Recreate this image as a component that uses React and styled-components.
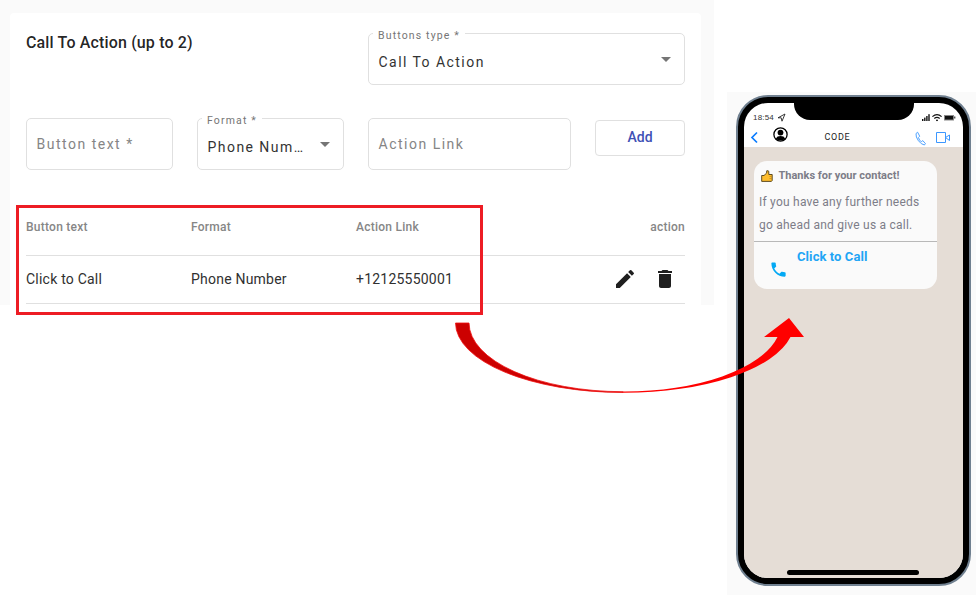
import styled, { createGlobalStyle } from "styled-components";
import { MdArrowDropDown, MdDelete, MdEdit, MdPhone } from "react-icons/md";

const rows = [
  { text: "Click to Call", format: "Phone Number", link: "+12125550001" },
];

function Field({ label, value, width, select }) {
  return (
    <FieldBox $width={width}>
      {value ? <FloatLabel>{label}</FloatLabel> : null}
      {value ? <Value>{value}</Value> : <Placeholder>{label}</Placeholder>}
      {select && <MdArrowDropDown className="arrow" />}
    </FieldBox>
  );
}

function StatusBar() {
  return (
    <Status>
      <Clock>
        18:54
        <svg width="9" height="9" viewBox="0 0 9 9">
          <path d="M8 1 1 4.8h3.2L5 8.200z" fill="none" stroke="#222" strokeWidth=".9" />
        </svg>
      </Clock>
      <svg width="34" height="9" viewBox="0 0 34 9">
        <g fill="#111">
          <rect x="0" y="6" width="1.4" height="2" />
          <rect x="2.1" y="4.6" width="1.4" height="3.4" />
          <rect x="4.2" y="3" width="1.4" height="5" />
          <rect x="6.3" y="1.2" width="1.4" height="6.8" />
          <rect x="22" y="2" width="10" height="5.5" fill="#888" />
          <rect x="23" y="3" width="8" height="3.5" />
          <rect x="32.3" y="3.5" width="1" height="2" />
        </g>
        <g fill="none" stroke="#111" strokeWidth="1.2">
          <path d="M10.4 3.6Q15 -.4 19.6 3.6" />
          <path d="M12.300 5.500Q15 3.200 17.700 5.500" />
          <path d="M14.200 7 15 7.600 15.800 7" />
        </g>
      </svg>
    </Status>
  );
}

function ChatHeader() {
  return (
    <ChatBar>
      <svg width="9" height="13" viewBox="0 0 9 13">
        <path d="M7 1.500 2 6.500l5 5" fill="none" stroke="#0a7cff" strokeWidth="1.700" />
      </svg>
      <Avatar width="15" height="15" viewBox="0 0 15 15">
        <circle cx="7.5" cy="7.5" r="6.6" fill="#fff" stroke="#000" strokeWidth="1.3" />
        <circle cx="7.5" cy="5.6" r="2.9" />
        <path d="M2.800 11.400Q4 9 7.500 9t4.700 2.400Q10.300 13.600 7.500 13.600T2.800 11.400z" />
      </Avatar>
      <Contact>CODE</Contact>
      <Handset width="11" height="15" viewBox="0 0 11 15">
        <path
          d="M2.600 1.200 1 2.600Q.6 6 3.400 9.700t6 4.300l1-1.400-2.600-3-1.500 1.200Q4.200 9.300 3.400 6.500l1.300-1.300z"
          fill="none"
          stroke="#3b97ff"
          strokeWidth=".9"
        />
      </Handset>
      <Camera width="15" height="13" viewBox="0 0 15 13">
        <path
          d="M.5 1.500h9v10h-9zM9.500 6.500 13.500 4v5.500z"
          fill="none"
          stroke="#3b97ff"
        />
      </Camera>
    </ChatBar>
  );
}

function App() {
  return (
    <Page>
      <GlobalStyle />
      <Editor>
        <Card>
          <TopRow>
            <Title>Call To Action (up to 2)</Title>
            <Field label="Buttons type *" value="Call To Action" width={317} select />
          </TopRow>
          <FormRow>
            <Field label="Button text *" width={147} />
            <Field label="Format *" value="Phone Num…" width={147} select />
            <Field label="Action Link" width={203} />
            <AddButton>Add</AddButton>
          </FormRow>
          <HeadRow>
            <span>Button text</span>
            <span>Format</span>
            <span>Action Link</span>
            <span>action</span>
          </HeadRow>
          {rows.map((row) => (
            <BodyRow key={row.link}>
              <span>{row.text}</span>
              <span>{row.format}</span>
              <span>{row.link}</span>
              <Actions>
                <MdEdit />
                <MdDelete />
              </Actions>
            </BodyRow>
          ))}
        </Card>
      </Editor>

      <Preview>
        <Phone>
          <Screen>
            <Notch />
            <StatusBar />
            <ChatHeader />
            <Chat>
              <Bubble>
                <BubbleTitle>
                  <svg width="12" height="12" viewBox="0 0 12 12">
                    <path
                      d="M.7 5.500h2.300L5.700 3V.8h1.600l.5 1v2.700h3.400v6l-.8.900H.7z"
                      fill="#fdbd2e"
                      stroke="#4d3c16"
                      strokeWidth=".9"
                    />
                    <path d="M8.500 6.500h2M8.500 8.500h2" stroke="#b27a16" strokeWidth=".6" />
                  </svg>
                  Thanks for your contact!
                </BubbleTitle>
                <BubbleText>
                  If you have any further needs
                  <br />
                  go ahead and give us a call.
                </BubbleText>
                <CallAction>
                  <MdPhone />
                  <span>Click to Call</span>
                </CallAction>
              </Bubble>
            </Chat>
            <HomeBar />
          </Screen>
        </Phone>
      </Preview>

      <Highlight />
      <Arrow width="977" height="595" viewBox="0 0 977 595">
        <path
          d="M623 392.700A170 69.700 0 0 0 790.500 337H804L789 318 764 337H777.500A156 69 0 0 1 623 391.500z"
          fill="#ff0000"
        />
        <path
          d="M455.500 323A168 69.700 0 0 0 623 392.500V391.700A154 69 0 0 1 469 323z"
          fill="#cc0000"
          stroke="#f01010"
          strokeWidth=".8"
        />
      </Arrow>
    </Page>
  );
}

const GlobalStyle = createGlobalStyle`
  * {
    box-sizing: border-box;
  }
  body {
    margin: 0;
    background: #fff;
    font-family: Roboto, "Liberation Sans", sans-serif;
  }
`;

const Page = styled.div`
  position: relative;
  display: flex;
  justify-content: space-between;
  width: 977px;
  height: 595px;
  padding-right: 1px;
  overflow: hidden;
`;

const Editor = styled.section`
  width: 714px;
  height: 305px;
  padding: 13px 13px 0 10px;
  background: #fafafa;
`;

const Card = styled.div`
  height: 292px;
  padding: 20px 16px 0;
  border-radius: 4px 4px 0 0;
  background: #fff;
`;

const TopRow = styled.div`
  display: flex;
  justify-content: space-between;
`;

const Title = styled.h3`
  margin: 0;
  font-size: 16px;
  font-weight: 500;
  line-height: 19px;
  letter-spacing: 0.15px;
  color: rgba(0, 0, 0, 0.87);
`;

const FieldBox = styled.div`
  position: relative;
  display: flex;
  align-items: center;
  width: ${({ $width }) => $width}px;
  height: 52px;
  padding: 0 6px 0 9.5px;
  border: 1px solid #e0e0e0;
  border-radius: 5px;
  font-size: 14px;
  letter-spacing: 1.5px;
  white-space: nowrap;

  & .arrow {
    width: 24px;
    height: 24px;
    margin-left: auto;
    color: #757575;
  }
`;

const FloatLabel = styled.span`
  position: absolute;
  top: -5px;
  left: 4px;
  padding: 0 5px;
  background: #fff;
  font-size: 10.5px;
  line-height: 14px;
  letter-spacing: 1.15px;
  color: #757575;
`;

const Value = styled.span`
  padding-top: 5px;
  letter-spacing: 1.45px;
  color: #333;
`;

const Placeholder = styled.span`
  color: #858585;
`;

const FormRow = styled.div`
  display: flex;
  gap: 24px;
  margin-top: 33px;
`;

const AddButton = styled.button`
  flex: 1;
  height: 36px;
  margin-top: 2px;
  padding: 0 0 2px;
  border: 1px solid #e0e0e0;
  border-radius: 4px;
  background: #fff;
  font: 500 14px Roboto, sans-serif;
  color: #3f51b5;
`;

const TableRow = styled.div`
  display: grid;
  grid-template-columns: 165px 165px 165px 1fr;
  align-items: center;
  border-bottom: 1px solid #e0e0e0;
`;

const HeadRow = styled(TableRow)`
  height: 57px;
  margin-top: 29px;
  font-size: 12px;
  font-weight: 500;
  letter-spacing: 0.25px;
  color: #868686;

  & span:last-child {
    text-align: right;
  }
`;

const BodyRow = styled(TableRow)`
  height: 48px;
  padding-bottom: 2px;
  font-size: 14px;
  letter-spacing: 0.22px;
  color: #303030;
`;

const Actions = styled.div`
  display: flex;
  justify-content: flex-end;
  gap: 16px;
  padding-right: 8px;

  & svg {
    width: 24px;
    height: 24px;
    color: #1f1f1f;
  }
`;

const Preview = styled.aside`
  width: 249px;
  height: 503px;
  margin-top: 92px;
  padding: 3px 5px 0 9px;
  background: #fafafa;
`;

const Phone = styled.div`
  height: 491px;
  padding: 6px;
  border: 2px solid #708090;
  border-radius: 32px;
  background: #000;
`;

const Screen = styled.div`
  position: relative;
  display: flex;
  flex-direction: column;
  height: 475px;
  border-radius: 24px;
  background: #fff;
  overflow: hidden;
`;

const Notch = styled.div`
  position: absolute;
  top: -1px;
  left: 50px;
  width: 120px;
  height: 18px;
  border-radius: 0 0 16px 16px;
  background: #000;
`;

const Status = styled.div`
  display: flex;
  justify-content: space-between;
  align-items: center;
  height: 24px;
  padding: 4px 7px 0 9px;
`;

const Clock = styled.div`
  display: flex;
  align-items: center;
  gap: 3px;
  font: 8px "Liberation Sans", sans-serif;
  letter-spacing: 0.2px;
  color: #333;
`;

const ChatBar = styled.div`
  display: flex;
  align-items: center;
  height: 20px;
  padding: 0 12px 0 6px;
`;

const Avatar = styled.svg`
  margin: -6px 0 0 13.5px;
`;

const Contact = styled.span`
  margin: 0 auto 0 37px;
  font: 9px Roboto, sans-serif;
  letter-spacing: 0.7px;
  color: #222;
`;

const Handset = styled.svg`
  margin-top: 2px;
`;

const Camera = styled.svg`
  margin: 1px 0 0 10px;
`;

const Chat = styled.div`
  flex: 1;
  padding: 14px 26px 0 10px;
  background: #e5ddd6;
`;

const Bubble = styled.div`
  height: 128px;
  border-radius: 13px;
  background: #fafafa;
`;

const BubbleTitle = styled.div`
  display: flex;
  align-items: center;
  gap: 6px;
  height: 29px;
  padding-left: 6.5px;
  font-size: 11px;
  font-weight: 700;
  color: #7d7d88;
`;

const BubbleText = styled.p`
  height: 52px;
  margin: 0;
  padding: 1px 0 0 5px;
  border-bottom: 1px solid #b8b8b8;
  font-size: 12px;
  line-height: 23px;
  letter-spacing: 0.23px;
  white-space: nowrap;
  color: #7d7d88;
`;

const CallAction = styled.div`
  display: flex;
  padding: 7px 0 0 15px;
  font-size: 13px;
  font-weight: 700;
  line-height: 16px;
  letter-spacing: 0.08px;
  color: #1ea5f5;

  & svg {
    width: 19px;
    height: 19px;
    margin: 11px 9px 0 0;
    color: #03a9f4;
  }
`;

const HomeBar = styled.div`
  position: absolute;
  bottom: 3px;
  left: 43px;
  width: 132px;
  height: 5px;
  border-radius: 3px;
  background: #000;
`;

const Highlight = styled.div`
  position: absolute;
  top: 205px;
  left: 16px;
  width: 467px;
  height: 110px;
  border: 3px solid #ed1c24;
`;

const Arrow = styled.svg`
  position: absolute;
  top: 0;
  left: 0;
`;

export default App;
